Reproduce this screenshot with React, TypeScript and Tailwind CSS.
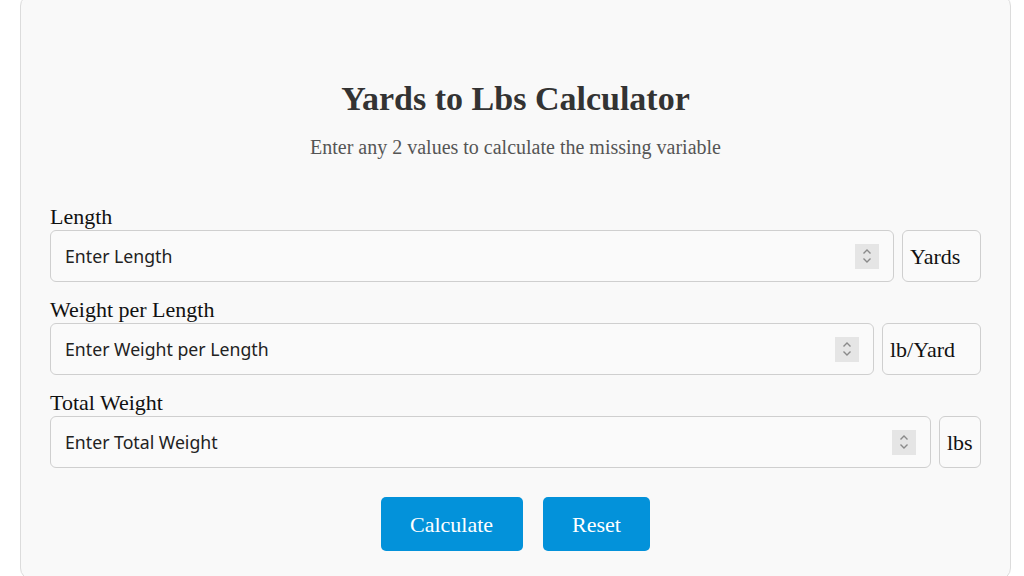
import { useState } from 'react';

type Field = {
  id: string;
  label: string;
  placeholder: string;
  unit: string;
  unitWidth: string;
};

const FIELDS: Field[] = [
  { id: 'length', label: 'Length', placeholder: 'Enter Length', unit: 'Yards', unitWidth: 'w-[79px]' },
  { id: 'wpl', label: 'Weight per Length', placeholder: 'Enter Weight per Length', unit: 'lb/Yard', unitWidth: 'w-[99px]' },
  { id: 'total', label: 'Total Weight', placeholder: 'Enter Total Weight', unit: 'lbs', unitWidth: 'w-[42px]' },
];

const serif = 'font-["Liberation_Serif","Times_New_Roman",serif]';

function Spinner() {
  return (
    <div className="flex h-[25px] w-[24px] shrink-0 flex-col items-center justify-center bg-[#e5e5e5]">
      <svg width="12" height="18" viewBox="0 0 12 18" fill="none" stroke="#8a8a8a" strokeWidth="1.4">
        <path d="M2.5 6.5 6 3l3.5 3.5" />
        <path d="M2.5 11.5 6 15l3.5-3.5" />
      </svg>
    </div>
  );
}

export default function App() {
  const [values, setValues] = useState<Record<string, string>>({ length: '', wpl: '', total: '' });

  return (
    <div className="min-h-screen overflow-hidden bg-white">
      <div
        className={`ml-[20px] -mt-[6px] w-[991px] rounded-[12px] border border-[#dcdcdc] bg-[#f9f9f9] px-[29px] pt-[84px] pb-[28px] ${serif}`}
      >
        <h1 className="text-center text-[34px] font-bold leading-[40px] text-[#333]">Yards to Lbs Calculator</h1>
        <p className="mt-[15px] text-center text-[20px] leading-[26px] text-[#555]">
          Enter any 2 values to calculate the missing variable
        </p>

        <div className="mt-[44px] flex flex-col gap-[15px]">
          {FIELDS.map((f) => (
            <div key={f.id}>
              <label htmlFor={f.id} className="block text-[22px] leading-[26px] text-[#111]">
                {f.label}
              </label>
              <div className="flex gap-2">
                <div className="flex h-[52px] flex-1 items-center rounded-[6px] border border-[#cfcfcf] bg-[#fafafa] pl-[14px] pr-[14px]">
                  <input
                    id={f.id}
                    type="text"
                    value={values[f.id]}
                    onChange={(e) => setValues((v) => ({ ...v, [f.id]: e.target.value }))}
                    placeholder={f.placeholder}
                    className='min-w-0 flex-1 bg-transparent font-["Noto_Sans",sans-serif] text-[17.7px] text-[#222] outline-none placeholder:text-[#222]'
                  />
                  <Spinner />
                </div>
                <div
                  className={`flex h-[52px] shrink-0 items-center rounded-[6px] border border-[#cfcfcf] bg-[#fafafa] pl-[7px] text-[22px] text-[#111] ${f.unitWidth}`}
                >
                  {f.unit}
                </div>
              </div>
            </div>
          ))}
        </div>

        <div className="mt-[29px] flex justify-center gap-5">
          <button className="h-[54px] rounded-[5px] bg-[#0392da] px-[29.5px] text-[22px] text-white">Calculate</button>
          <button
            className="h-[54px] rounded-[5px] bg-[#0392da] px-[29.5px] text-[22px] text-white"
            onClick={() => setValues({ length: '', wpl: '', total: '' })}
          >
            Reset
          </button>
        </div>
      </div>
    </div>
  );
}
